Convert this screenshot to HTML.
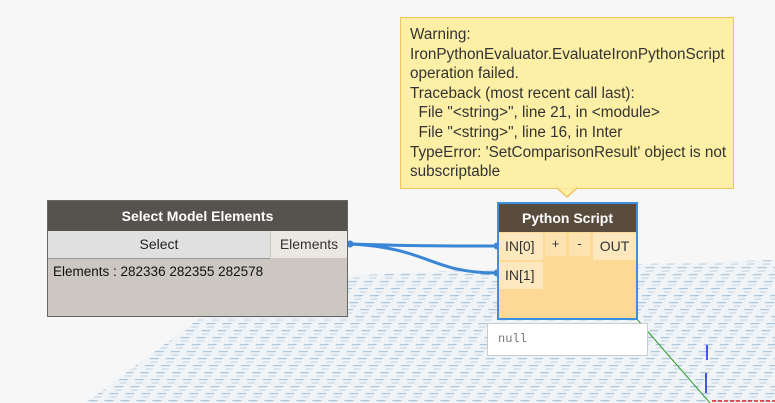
<!DOCTYPE html>
<html><head><style>
body{margin:0;width:775px;height:403px;overflow:hidden;background:#f7f7f7;font-family:"Liberation Sans","DejaVu Sans",sans-serif;position:relative}
.a{position:absolute;box-sizing:border-box}
</style></head><body>
<svg class="a" style="left:0;top:0" width="775" height="403">
<defs>
<pattern id="g" width="16" height="7" patternUnits="userSpaceOnUse" patternTransform="skewX(-35)">
<rect width="16" height="7" fill="#f1f4f7"/>
<rect x="1" y="1" width="9" height="1.2" fill="#a9c3da"/>
<rect x="4" y="4.5" width="7" height="1" fill="#c2d4e4"/>
</pattern>
</defs>
<polygon points="85,403 200,318 345,276 500,268 775,260 775,403" fill="url(#g)"/>
<line x1="636" y1="318" x2="710" y2="403" stroke="#2a9a2a" stroke-width="1"/>
<line x1="707" y1="345" x2="707" y2="360" stroke="#1020e0" stroke-width="1.5"/>
<line x1="706" y1="373" x2="706" y2="393" stroke="#1020e0" stroke-width="1.5"/>
<line x1="712" y1="401" x2="775" y2="401" stroke="#e02020" stroke-width="1.5" stroke-dasharray="4,2"/>
<path d="M350,244 C420,246 440,246 497,246" stroke="#3a86d6" stroke-width="3" fill="none"/>
<path d="M350,244 C430,248 430,273 497,273" stroke="#3a86d6" stroke-width="3" fill="none"/>
<circle cx="350" cy="244" r="3.5" fill="#3a86d6"/>
<circle cx="497" cy="246" r="3.5" fill="#3a86d6"/>
<circle cx="497" cy="273" r="3.5" fill="#3a86d6"/>
</svg>

<div class="a" style="left:400px;top:17px;width:334px;height:172px;background:#fdf0a6;border:1.5px solid #f3c25c;padding:7px 0 0 9px;font-size:15.3px;line-height:19.6px;color:#333;white-space:pre">Warning:
IronPythonEvaluator.EvaluateIronPythonScript
operation failed.
Traceback (most recent call last):
  File "&lt;string&gt;", line 21, in &lt;module&gt;
  File "&lt;string&gt;", line 16, in Inter
TypeError: 'SetComparisonResult' object is not
subscriptable</div>
<svg class="a" style="left:557px;top:187px" width="20" height="12"><polygon points="0,1 10,10 20,1" fill="#fdf0a6" stroke="#f3c25c" stroke-width="1.5"/><rect x="1" y="0" width="18" height="1.5" fill="#fdf0a6"/></svg>

<div class="a" style="left:47px;top:200px;width:301px;height:117px;background:#ccc8c1;border:1px solid #666"></div>
<div class="a" style="left:48px;top:201px;width:299px;height:30px;background:#56524d;color:#fff;font-weight:bold;font-size:14px;text-align:center;line-height:30px">Select Model Elements</div>
<div class="a" style="left:48px;top:231px;width:222px;height:28px;background:#e0e0e0;border-bottom:1px solid #999;font-size:14px;text-align:center;line-height:27px;color:#222">Select</div>
<div class="a" style="left:271px;top:231px;width:76px;height:27px;background:#ebe8e4;font-size:14px;text-align:center;line-height:27px;color:#333">Elements</div>
<div class="a" style="left:53px;top:264px;font-size:13.5px;color:#111">Elements : 282336 282355 282578</div>

<div class="a" style="left:497px;top:202px;width:141px;height:118px;background:#fcd995;border:2px solid #3d8fe0"></div>
<div class="a" style="left:499px;top:204px;width:137px;height:28px;background:#5a4c3c;color:#fff;font-weight:bold;font-size:14px;text-align:center;line-height:28px">Python Script</div>
<div class="a" style="left:499px;top:233px;width:44px;height:27px;background:#fde8bd;font-size:14px;line-height:27px;padding-left:6px;color:#333">IN[0]</div>
<div class="a" style="left:545px;top:233px;width:21px;height:23px;background:#fde3b0;font-size:13px;line-height:22px;text-align:center;color:#333">+</div>
<div class="a" style="left:569px;top:233px;width:21px;height:23px;background:#fde3b0;font-size:13px;line-height:22px;text-align:center;color:#333">-</div>
<div class="a" style="left:593px;top:233px;width:43px;height:27px;background:#fde8bd;font-size:14px;line-height:27px;text-align:center;color:#333">OUT</div>
<div class="a" style="left:499px;top:262px;width:44px;height:27px;background:#fde8bd;font-size:14px;line-height:27px;padding-left:6px;color:#333">IN[1]</div>

<div class="a" style="left:487px;top:323px;width:161px;height:33px;background:#fff;border:1px solid #ccc;font-family:'Liberation Mono',monospace;font-size:12px;line-height:31px;padding-left:10px;color:#777">null</div>
</body></html>
